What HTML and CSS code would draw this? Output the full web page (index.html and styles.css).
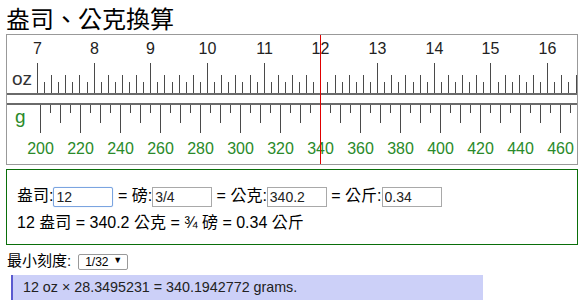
FILE: index.html
```html
<!DOCTYPE html>
<html lang="zh-Hant">
<head>
    <meta charset="UTF-8">
    <meta name="viewport" content="width=device-width, initial-scale=1.0">
    <title>盎司、公克換算</title>
    <link rel="stylesheet" href="styles.css">
</head>
<body>

<h1>盎司、公克換算</h1>

<!-- Ruler: ticks are drawn by the script below -->
<div class="ruler">
    <svg id="ruler" width="570" height="129" viewBox="0 0 570 129"></svg>
</div>

<div class="convert">
    <div class="row">盎司:<input class="active" value="12"> = 磅:<input value="3/4"> = 公克:<input value="340.2"> = 公斤:<input value="0.34"></div>
    <div class="row">12 盎司 = 340.2 公克 = ¾ 磅 = 0.34 公斤</div>
</div>

<div class="scale">
    最小刻度:
    <span class="select-wrap">
        <select>
            <option>1/8</option>
            <option>1/16</option>
            <option selected>1/32</option>
        </select>
        <span class="arrow">▼</span>
    </span>
</div>

<div class="note">12 oz × 28.3495231 = 340.1942772 grams.</div>

<script>
    const NS = 'http://www.w3.org/2000/svg';
    const OZ = 28.3495231; // grams per ounce
    const svg = document.getElementById('ruler');

    // 2px per gram, 200 g sits at x = 33
    function gx(g) {
        return g * 2 - 367;
    }

    function add(tag, attrs, text) {
        const el = document.createElementNS(NS, tag);
        for (const k in attrs) el.setAttribute(k, attrs[k]);
        if (text) el.textContent = text;
        svg.appendChild(el);
        return el;
    }

    // middle bars
    add('rect', { x: 0, y: 58, width: 570, height: 2, class: 'bar' });
    add('rect', { x: 0, y: 68, width: 570, height: 2, class: 'bar' });

    // ounce ticks, every 1/8 oz, starting at 7 oz
    for (let k = 7 * 8; k <= 8 * 20; k++) {
        const x = Math.round(gx(k / 8 * OZ));
        if (x > 569) break;
        const top = k % 8 === 0 ? 28 : (k % 2 === 0 ? 40 : 47);
        add('rect', { x: x, y: top, width: 1, height: 58 - top, class: 'tick' });
        if (k % 8 === 0) {
            add('text', { x: x + 0.5, y: 19, class: 'oz-num' }, String(k / 8));
        }
    }

    // gram ticks, every 5 g, starting at 200 g
    for (let g = 200; g <= 600; g += 5) {
        const x = Math.round(gx(g));
        if (x > 569) break;
        const bottom = g % 20 === 0 ? 98 : (g % 10 === 0 ? 88 : 78);
        add('rect', { x: x, y: 70, width: 1, height: bottom - 70, class: 'tick' });
        if (g % 20 === 0) {
            add('text', { x: x + 0.5, y: 119, class: 'g-num' }, String(g));
        }
    }

    add('text', { x: 5, y: 50, class: 'unit' }, 'oz');
    add('text', { x: 8, y: 88, class: 'unit green' }, 'g');

    // current value marker
    add('rect', { x: Math.round(gx(12 * OZ)), y: 0, width: 1, height: 129, class: 'marker' });
</script>

</body>
</html>
```

FILE: styles.css
```css
body {
    font-family: "Liberation Sans", Arial, "Noto Sans CJK TC", sans-serif;
    margin: 0;
    padding: 0 6px;
    background-color: #fff;
    color: #000;
}
h1 {
    font-family: "Noto Sans CJK TC", sans-serif;
    font-size: 24px;
    font-weight: normal;
    line-height: 30px;
    margin: 3px 0 1px;
}
.ruler {
    width: 572px;
    box-sizing: border-box;
    border: 1px solid #999;
    height: 131px;
}
.ruler svg {
    display: block;
}
.ruler .tick {
    fill: #4a4a4a;
}
.ruler .bar {
    fill: #6a6a6a;
}
.ruler .marker {
    fill: #e00000;
}
.ruler text {
    font-family: "Liberation Sans", Arial, sans-serif;
    font-size: 16px;
}
.ruler .oz-num {
    fill: #222;
    text-anchor: middle;
}
.ruler .g-num {
    fill: #2a8a2a;
    text-anchor: middle;
}
.ruler .unit {
    font-size: 19px;
    fill: #333;
}
.ruler .unit.green {
    fill: #2a8a2a;
}
.convert {
    width: 572px;
    box-sizing: border-box;
    margin-top: 4px;
    border: 1px solid #0a6e0a;
    padding: 15px 10px 10px;
    font-size: 16px;
}
.convert .row {
    line-height: 22px;
    height: 22px;
    white-space: nowrap;
}
.convert .row + .row {
    margin-top: 5px;
}
.convert input {
    width: 60px;
    height: 20px;
    box-sizing: border-box;
    margin: 0;
    padding: 0 2px;
    border: 1px solid #a9a9a9;
    font-family: "Liberation Sans", Arial, sans-serif;
    font-size: 14px;
    color: #222;
    vertical-align: middle;
    outline: none;
}
.convert input.active {
    border-color: #7ba4e0;
    border-radius: 2px;
    box-shadow: 0 0 1px #9cc0f0;
}
.scale {
    display: flex;
    align-items: center;
    gap: 7px;
    height: 22px;
    margin-top: 3px;
    font-size: 15px;
    padding-left: 1px;
}
.select-wrap {
    position: relative;
    display: inline-block;
    margin-top: 3px;
}
.select-wrap select {
    appearance: none;
    -webkit-appearance: none;
    height: 16px;
    width: 50px;
    box-sizing: border-box;
    padding: 0 0 0 6px;
    border: 1px solid #999;
    border-radius: 2px;
    background-color: #fff;
    font-family: "Liberation Sans", Arial, sans-serif;
    font-size: 12px;
    line-height: 14px;
    color: #000;
}
.select-wrap .arrow {
    position: absolute;
    right: 6px;
    top: 3px;
    font-size: 9px;
    line-height: 10px;
    pointer-events: none;
}
.note {
    width: 472px;
    box-sizing: border-box;
    margin: 5px 0 0 5px;
    height: 25px;
    line-height: 25px;
    padding-left: 10px;
    background-color: #ccd0f8;
    border-left: 2px solid #5a5ad0;
    font-size: 14.3px;
    color: #222;
}
```
